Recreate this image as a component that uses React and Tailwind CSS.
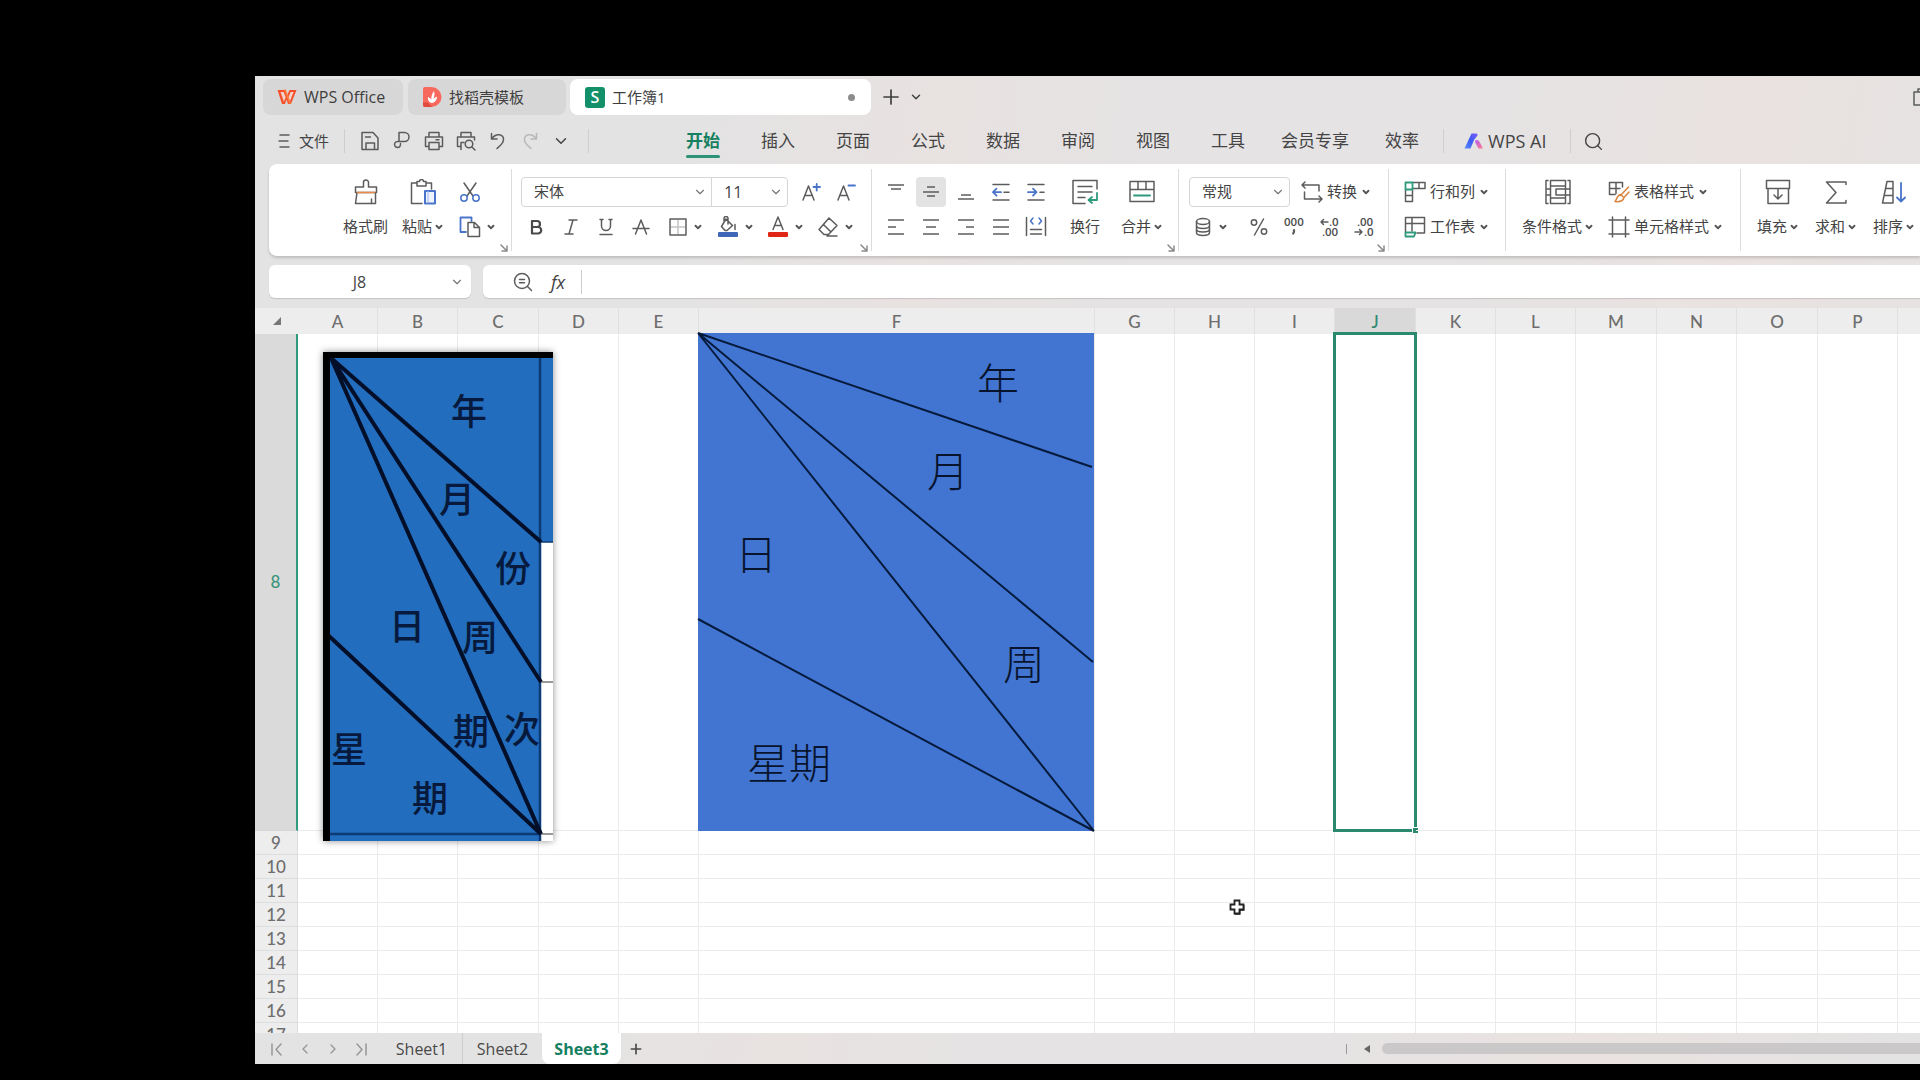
import { ChevronDown, ChevronLeft, ChevronRight, Plus, Search } from "lucide-react";

const MENUS = ["开始", "插入", "页面", "公式", "数据", "审阅", "视图", "工具"];

// The last column runs off the right edge of the window
const COLUMNS = [
  { name: "A", width: 80 },
  { name: "B", width: 80 },
  { name: "C", width: 81 },
  { name: "D", width: 80 },
  { name: "E", width: 80 },
  { name: "F", width: 396 },
  { name: "G", width: 80 },
  { name: "H", width: 80 },
  { name: "I", width: 80 },
  { name: "J", width: 81 },
  { name: "K", width: 80 },
  { name: "L", width: 80 },
  { name: "M", width: 81 },
  { name: "N", width: 80 },
  { name: "O", width: 81 },
  { name: "P", width: 80 },
  { name: "Q", width: 80 },
];

const ROWS = [9, 10, 11, 12, 13, 14, 15, 16, 17];

const GRAY = "#5c5c5c";
const BLUE = "#4a74c9";
const GREEN = "#2f9a7c";

const Svg = ({ w = 20, h = w, children, stroke = GRAY }) => (
  <svg
    width={w}
    height={h}
    viewBox={`0 0 ${w} ${h}`}
    fill="none"
    stroke={stroke}
    strokeWidth="1.5"
    strokeLinecap="round"
    strokeLinejoin="round"
    className="shrink-0"
    aria-hidden="true"
  >
    {children}
  </svg>
);

const Caret = () => <ChevronDown size={10} strokeWidth={4.5} className="shrink-0 text-[#555]" />;

/* ---------- Icons ---------- */

const WpsLogo = () => (
  <Svg w={20} h={16} stroke="none">
    <path d="M0.500 1h8l1.800 5L12.500 1h7L14 15h-3L9.500 10.500 8 15H5z" fill="#f4502c" />
    <path d="M3.500 3h3.200l2 5.500-1.800 4.200z" fill="#f3d2c9" />
    <path d="M13.600 3h3L12.800 12.500l-1.600-4z" fill="#f3d2c9" />
    <path d="M8 1l5 13" stroke="#ff7d42" strokeWidth="1.800" />
  </Svg>
);

const DockerLogo = () => (
  <Svg w={20} h={20} stroke="none">
    <path d="M3 0h6.500a9.500 9.500 0 0 1 0 20H3a2 2 0 0 1-2-2V2a2 2 0 0 1 2-2z" fill="#f7695c" />
    <path d="M1 15.500h5l4 4.500H3a2 2 0 0 1-2-2z" fill="#e2483e" />
    <path d="M10 16c-3-.500-4.500-3-4-6 1.500.500 2.800 1.500 3.300 3C9 9.500 10 6.500 12 4c.800 3 .500 5.500-.500 8 .8-1.200 2-2 3.500-2.200-.300 3.500-2 6-5 6.200z" fill="#fff" />
  </Svg>
);

const AiLogo = () => (
  <Svg w={20} h={16} stroke="none">
    <defs>
      <linearGradient id="ai-a" x1="0" y1="1" x2="1" y2="0">
        <stop offset="0" stopColor="#5b8cff" />
        <stop offset="0.5" stopColor="#3d5af5" />
        <stop offset="1" stopColor="#7f5cf6" />
      </linearGradient>
      <linearGradient id="ai-b" x1="0" y1="0" x2="1" y2="1">
        <stop offset="0" stopColor="#b45cf0" />
        <stop offset="1" stopColor="#ff7f8f" />
      </linearGradient>
    </defs>
    <path d="M7.500 0.500h4.800q1.700 0 1.200 2L10 7 6.500 15.500H0.500z" fill="url(#ai-a)" />
    <path d="M11 7.500q3-1.500 4.500 1.200l3.500 6.800h-4.500L11.500 10z" fill="url(#ai-b)" />
  </Svg>
);

const IconMenu = () => <Svg w={14} h={16}><path d="M3 2h9M2 8h9M3 14h9" /></Svg>;
const IconSave = () => (
  <Svg><path d="M2 1.500h11l5 5.500v11.500H2zM6 18v-6h8.500v6M5.500 6h5" /></Svg>
);
const IconPdf = () => (
  <Svg><path d="M7 10.500V1.500h5.500a4.500 4.500 0 0 1 0 9H5.500a3 3 0 1 0 2.500 4.700c.5-.8.500-1.700.5-2.700" /></Svg>
);
const IconPrint = () => (
  <Svg><path d="M5 6V1.500h10V6M5 15.500H1.500V6h17v9.500H15M5 11.500h10v7H5zM12 8.700h3" /></Svg>
);
const IconPreview = () => (
  <Svg><path d="M5 6V1.500h10V6M18.500 9V6h-17v9.500H5M5 18.500v-7h3" /><circle cx="13" cy="13" r="3.800" /><path d="M16 16l3 3" /></Svg>
);
const IconUndo = () => <Svg><path d="M3.500 2.500v5.500h5.500M4 7.500C8 1.500 16 3 15.500 9c-.3 3.500-3.500 6-6.500 8.500" /></Svg>;
const IconRedo = () => (
  <Svg stroke="#b9b7b7"><path d="M16.500 2.500v5.500H11M16 7.500C12 1.500 4 3 4.500 9c.3 3.500 3.500 6 6.500 8.500" /></Svg>
);

const IconBrush = () => (
  <Svg w={26}>
    <path d="M10.500 8V3.500a2.500 2.500 0 0 1 5 0V8h8v5.500h-21V8zM4 13.500L2.500 24.500H22.500V13.500" />
    <path d="M4.500 13.500h17" stroke="#e8894a" />
    <path d="M18.500 20v4.500" />
  </Svg>
);
const IconPaste = () => (
  <Svg w={28} h={26}>
    <path d="M8 4H2.500v20.500H13M17 4h5.500v6M8 2.500h2.500a2 2 0 0 1 4 0H17V7H8z" />
    <path d="M16 12h10v12.500H16z" stroke={BLUE} fill="#eef3fd" strokeWidth="2" />
    <path d="M19 12v12" stroke="#9db6e8" strokeWidth="1" />
  </Svg>
);
const IconCut = () => (
  <Svg w={22}>
    <path d="M5 2l9 13M17 2L8 15" />
    <circle cx="5" cy="17" r="3.200" stroke={BLUE} />
    <circle cx="17" cy="17" r="3.200" stroke={BLUE} />
  </Svg>
);
const IconCopy = () => (
  <Svg w={22}>
    <path d="M7 16H1.500V1.500h11V5" stroke={BLUE} strokeWidth="1.800" />
    <path d="M9 6.500h6.500L20.500 11.500v9H9zM15 6.500v5h5.500" />
  </Svg>
);
const IconLetter = ({ sign }) => (
  <Svg w={20}>
    <path d="M2 18L7.500 4 13 18M4 13.500h7" />
    <path d={sign === "+" ? "M12.500 5h6.500M15.700 2v6.500" : "M12.500 3.500h6.500"} stroke={BLUE} strokeWidth="1.800" />
  </Svg>
);
const IconBold = () => <Svg w={18}><path d="M5 3h5a3 3 0 0 1 0 6H5zM5 9h6a3.200 3.200 0 0 1 0 6.500H5z" strokeWidth="2.200" stroke="#4a4a4a" /></Svg>;
const IconItalic = () => <Svg w={18}><path d="M7 2h8M3 16h8M11 2L7 16" /></Svg>;
const IconUnderline = () => <Svg w={18}><path d="M4.500 1.500V8a4.500 4.500 0 0 0 9 0V1.500M3 1.500h3M12 1.500h3M3 16.500h12" /></Svg>;
const IconStrike = () => <Svg w={18}><path d="M3.500 16L9 2l5.500 14M1 10.500h16" /></Svg>;
const IconBorder = () => (
  <Svg w={20}><path d="M10 3v14M3 10h14" stroke="#c4c4c4" /><path d="M2 2h16v16H2z" /></Svg>
);
const IconFill = () => (
  <Svg w={22}>
    <path d="M9 3l6.500 6.500-5.500 5H8L4.500 10.500zM7 5V2.500a2 2 0 0 1 4 0V8M18 8.500v5" />
    <rect x="1" y="16" width="20" height="5" rx="1" fill="#3f66b8" stroke="none" />
  </Svg>
);
const IconFontColor = () => (
  <Svg w={22}>
    <path d="M6 13.500L11 1l5 12.500M8 9.500h6" />
    <rect x="1" y="16" width="20" height="5" rx="1" fill="#e02617" stroke="none" />
  </Svg>
);
const IconEraser = () => (
  <Svg w={22}><path d="M12 2l8 7.500-8.500 9H7l-5-5zM6.500 8.500l7.500 7.500M10 20h10" /></Svg>
);

// Horizontal rules that make up the alignment buttons: [x1, x2, y]
const Rules = ({ lines }) => (
  <Svg w={20}>
    {lines.map(([a, b, y], i) => (
      <path key={i} d={`M${a} ${y}H${b}`} strokeLinecap="butt" strokeWidth="1.600" />
    ))}
  </Svg>
);
const IconOutdent = () => (
  <Svg w={20}><path d="M2 2.500h16M2 18h16M13 10.200h5" /><path d="M10 10.200H2M5.500 6.700L2 10.200l3.500 3.500" stroke={BLUE} strokeWidth="1.800" /></Svg>
);
const IconIndent = () => (
  <Svg w={20}><path d="M2 2.500h16M2 18h16M14 10.200h4" /><path d="M2 10.200h8M7 6.700l3.500 3.500L7 13.700" stroke={BLUE} strokeWidth="1.800" /></Svg>
);
const IconDistribute = () => (
  <Svg w={22}>
    <path d="M1.500 1.500v18M20.500 1.500v18M5.500 13.500h11M5.500 18h11" />
    <path d="M8 2L5.500 5 8 8M14 2l2.500 3L14 8" stroke={BLUE} />
  </Svg>
);
const IconWrap = () => (
  <Svg w={28}>
    <path d="M14 25.500H2V2.500h24V11M7 8.500h14M7 14h14M7 19.500h7" />
    <path d="M26 15v7h-8M21 19l-3.500 3 3.500 3" stroke={GREEN} strokeWidth="1.800" />
  </Svg>
);
const IconMerge = () => (
  <Svg w={28}>
    <path d="M2 3.500h24v20H2zM2 11.500h24M10 3.500v8M18 3.500v8" />
    <path d="M6 17.500h16" stroke={GREEN} strokeWidth="1.800" />
  </Svg>
);
const IconConvert = () => (
  <Svg w={22}><path d="M4 1L1 4l3 3M1 4h17v6M3.500 11v7h17M18 15l3 3-3 3" /></Svg>
);
const IconMoney = () => (
  <Svg w={20}>
    <ellipse cx="10" cy="4.500" rx="6.500" ry="3" />
    <path d="M3.500 4.500v11c0 4 13 4 13 0v-11M3.500 8.500c0 4 13 4 13 0M3.500 12c0 4 13 4 13 0" />
  </Svg>
);
const IconPercent = () => (
  <Svg w={20}><circle cx="5" cy="5.500" r="2.700" /><circle cx="15" cy="14.500" r="2.700" /><path d="M14.500 2l-9 16" /></Svg>
);
const DigitText = ({ x, y, children }) => (
  <text x={x} y={y} fill="#4d4d4d" stroke="none" fontSize="10" fontWeight="600" fontFamily="Inter, sans-serif">
    {children}
  </text>
);
const IconThousands = () => (
  <Svg w={20}><DigitText x={0} y={8.500}>000</DigitText><path d="M10 13v2l-.8 1.500" strokeWidth="2.200" /></Svg>
);
const IconMoreDecimals = () => (
  <Svg w={20}><path d="M9 5H2M4.500 2.500L2 5l2.500 2.500" /><DigitText x={10} y={8.500}>.0</DigitText><DigitText x={3} y={18.500}>.00</DigitText></Svg>
);
const IconLessDecimals = () => (
  <Svg w={20}><DigitText x={3} y={8.500}>.00</DigitText><path d="M1 15h7M5.500 12.500L8 15l-2.500 2.500" /><DigitText x={10} y={18.500}>.0</DigitText></Svg>
);
const IconRowsCols = () => (
  <Svg w={22}>
    <path d="M9 1.500h12v6H9M15 1.500v6M1.500 9v11.500h7V9M1.500 14.500h7" />
    <path d="M1.500 1.500h7v7h-7z" stroke={GREEN} strokeWidth="1.800" />
  </Svg>
);
const IconSheet = () => (
  <Svg w={22}>
    <path d="M1.500 16V1.500h19V17H13M1.500 7.500h19M8 1.500V15" />
    <path d="M1.500 16.500h10l-1.500 4H1.500z" stroke={GREEN} strokeWidth="1.800" />
  </Svg>
);
const IconConditional = () => (
  <Svg w={28}>
    <path d="M4 2.500H2v23h2M24 2.500h2v23h-2M6.500 2.500h15V8h-15zM6.500 20h15v5.500h-15zM6.500 8v12M21.500 8v3H12v6h9.500v3M21.500 11v6M2 11h4.500M2 17h4.500M21.500 11H26M21.500 17H26" />
  </Svg>
);
const IconTableStyle = () => (
  <Svg w={22}>
    <path d="M7 13.500H1.500v-12h13V6M1.500 7.500H12M8 1.500v11" />
    <path d="M20.500 6l-8 8.500M21 11l-5.500 6M12.500 13.500l3.500 3c-1 4-5 4.500-9 4 2-1.500 1.500-6 5.500-7z" stroke="#d9843f" />
  </Svg>
);
const IconCellStyle = () => (
  <Svg w={22}><path d="M4.500 1v20M17.500 1v20M1 4h20M1 18h20" /></Svg>
);
const IconFillDown = () => (
  <Svg w={26}><path d="M1.500 1.500h23v8h-23zM3 9.500v15h20.500v-15M13 9.500v10M9 16l4 4 4-4" /></Svg>
);
const IconSum = () => (
  <Svg w={24}><path d="M22 4.500V2H2.500L12 12.500 2.500 23H22v-2.500" /></Svg>
);
const IconSort = () => (
  <Svg w={26}>
    <path d="M1.500 24L6 2.500h6V24zM4.500 9.500H12M3 16.500h9" />
    <path d="M20 4v18M16 18.500l4 4 4-4" stroke={BLUE} strokeWidth="1.800" />
  </Svg>
);

/* ---------- Ribbon pieces ---------- */

const ToolButton = ({ label, children, active = false, caret = false, narrow = false }) => (
  <button
    aria-label={label}
    className={`flex h-[30px] items-center justify-center rounded ${active ? "bg-[#e3e3e3]" : ""} ${
      caret ? "w-[39px] gap-[5px]" : narrow ? "w-6" : "w-[30px]"
    }`}
  >
    {children}
    {caret && <Caret />}
  </button>
);

const BigButton = ({ label, icon, caret = false }) => (
  <button className="flex flex-col items-start">
    <span className="flex h-[35px] items-center justify-center self-center">{icon}</span>
    <span className="flex h-[35px] items-center gap-[2px]">
      {label}
      {caret && <Caret />}
    </span>
  </button>
);

const WideButton = ({ label, icon }) => (
  <button className="flex h-[35px] items-center gap-1">
    {icon}
    {label}
    <Caret />
  </button>
);

const Row = ({ className, children }) => <div className={`flex h-[35px] items-center ${className}`}>{children}</div>;

const Group = ({ className, launcher, children }) => (
  <div className={`relative flex shrink-0 items-start pt-[10px] ${className}`}>
    {children}
    {launcher && (
      <button aria-label="更多设置" className="absolute right-1 bottom-1">
        <Svg w={8} stroke="#8a8a8a"><path d="M1 1l5 5M7 2v5H2" /></Svg>
      </button>
    )}
    <span className="absolute top-[5px] right-0 bottom-[5px] w-px bg-[#dcdcdc]" />
  </div>
);

const Ribbon = () => (
  <div className="ml-[14px] flex h-[92px] shrink-0 overflow-hidden rounded-l-lg bg-white text-[15px] whitespace-nowrap text-[#444] shadow-[0_2px_3px_rgba(0,0,0,0.16)]">
    <Group className="w-[243px] gap-[14px] pl-[74px]" launcher>
      <BigButton label="格式刷" icon={<IconBrush />} />
      <BigButton label="粘贴" icon={<IconPaste />} caret />
      <div>
        <Row><ToolButton label="剪切" narrow><IconCut /></ToolButton></Row>
        <Row><ToolButton label="复制" caret><IconCopy /></ToolButton></Row>
      </div>
    </Group>

    <Group className="w-[360px] pl-[9px]" launcher>
      <div>
        <Row className="gap-[5px]">
          <div className="mr-[3px] flex h-[30px] w-[267px] rounded border border-[#d6d6d6]">
            <div className="relative w-[190px] border-r border-[#d6d6d6]">
              <select aria-label="字体" className="h-full w-full appearance-none bg-transparent pl-3 outline-none">
                <option>宋体</option>
              </select>
              <ChevronDown size={14} className="pointer-events-none absolute top-[7px] right-1 text-[#777]" />
            </div>
            <div className="relative flex-1">
              <select aria-label="字号" className="h-full w-full appearance-none bg-transparent pl-3 text-base outline-none">
                <option>11</option>
              </select>
              <ChevronDown size={14} className="pointer-events-none absolute top-[7px] right-1 text-[#777]" />
            </div>
          </div>
          <ToolButton label="增大字号"><IconLetter sign="+" /></ToolButton>
          <ToolButton label="减小字号"><IconLetter sign="-" /></ToolButton>
        </Row>
        <Row className="gap-[11px] pl-[3px]">
          <ToolButton label="加粗" narrow><IconBold /></ToolButton>
          <ToolButton label="倾斜" narrow><IconItalic /></ToolButton>
          <ToolButton label="下划线" narrow><IconUnderline /></ToolButton>
          <ToolButton label="删除线" narrow><IconStrike /></ToolButton>
          <div className="ml-[2px] flex gap-[11px]">
            <ToolButton label="边框" caret><IconBorder /></ToolButton>
            <ToolButton label="填充颜色" caret><IconFill /></ToolButton>
            <ToolButton label="字体颜色" caret><IconFontColor /></ToolButton>
            <ToolButton label="清除" caret><IconEraser /></ToolButton>
          </div>
        </Row>
      </div>
    </Group>

    <Group className="w-[307px] pl-[9px]" launcher>
      <div>
        <Row className="gap-[5px]">
          <ToolButton label="顶端对齐"><Rules lines={[[2, 18, 3], [5, 15, 7]]} /></ToolButton>
          <ToolButton label="垂直居中" active><Rules lines={[[6, 14, 5], [2, 18, 10], [6, 14, 14]]} /></ToolButton>
          <ToolButton label="底端对齐"><Rules lines={[[5, 15, 13], [2, 18, 17]]} /></ToolButton>
          <ToolButton label="减少缩进"><IconOutdent /></ToolButton>
          <ToolButton label="增加缩进"><IconIndent /></ToolButton>
        </Row>
        <Row className="gap-[5px]">
          <ToolButton label="左对齐"><Rules lines={[[2, 18, 3], [2, 10, 10], [2, 18, 17]]} /></ToolButton>
          <ToolButton label="水平居中"><Rules lines={[[2, 18, 3], [5, 15, 10], [2, 18, 17]]} /></ToolButton>
          <ToolButton label="右对齐"><Rules lines={[[2, 18, 3], [10, 18, 10], [2, 18, 17]]} /></ToolButton>
          <ToolButton label="两端对齐"><Rules lines={[[2, 18, 3], [2, 18, 10], [2, 18, 17]]} /></ToolButton>
          <ToolButton label="分散对齐"><IconDistribute /></ToolButton>
        </Row>
      </div>
      <div className="ml-[19px] flex gap-[21px]">
        <BigButton label="换行" icon={<IconWrap />} />
        <BigButton label="合并" icon={<IconMerge />} caret />
      </div>
    </Group>

    <Group className="w-[210px] pl-[10px]" launcher>
      <div>
        <Row className="gap-[11px]">
          <div className="relative h-[30px] w-[101px] rounded border border-[#d6d6d6]">
            <select aria-label="数字格式" className="h-full w-full appearance-none bg-transparent pl-3 outline-none">
              <option>常规</option>
            </select>
            <ChevronDown size={14} className="pointer-events-none absolute top-[7px] right-1 text-[#777]" />
          </div>
          <WideButton label="转换" icon={<IconConvert />} />
        </Row>
        <Row className="gap-[5px] pl-[2px]">
          <ToolButton label="货币" caret><IconMoney /></ToolButton>
          <span className="w-1" />
          <ToolButton label="百分比"><IconPercent /></ToolButton>
          <ToolButton label="千位分隔"><IconThousands /></ToolButton>
          <ToolButton label="增加小数位数"><IconMoreDecimals /></ToolButton>
          <ToolButton label="减少小数位数"><IconLessDecimals /></ToolButton>
        </Row>
      </div>
    </Group>

    <Group className="w-[117px] pl-[15px]">
      <div>
        <WideButton label="行和列" icon={<IconRowsCols />} />
        <WideButton label="工作表" icon={<IconSheet />} />
      </div>
    </Group>

    <Group className="w-[235px] gap-[14px] pl-4">
      <BigButton label="条件格式" icon={<IconConditional />} caret />
      <div>
        <WideButton label="表格样式" icon={<IconTableStyle />} />
        <WideButton label="单元格样式" icon={<IconCellStyle />} />
      </div>
    </Group>

    <Group className="gap-4 pr-6 pl-4">
      <BigButton label="填充" icon={<IconFillDown />} caret />
      <BigButton label="求和" icon={<IconSum />} caret />
      <BigButton label="排序" icon={<IconSort />} caret />
    </Group>
  </div>
);

/* ---------- Title and menu bars ---------- */

const TitleBar = () => (
  <div className="flex shrink-0 items-center pt-[3px] pl-2 text-[15px] text-[#3f3f3f]">
    <button className="flex h-9 w-[140px] items-center gap-[7px] rounded-lg bg-[#d8d7d7] pl-[14px] text-base">
      <WpsLogo />
      WPS Office
    </button>
    <button className="ml-[5px] flex h-9 w-[158px] items-center gap-[7px] rounded-lg bg-[#d8d7d7] pl-[14px]">
      <DockerLogo />
      找稻壳模板
    </button>
    <button className="ml-1 flex h-9 w-[301px] items-center gap-[7px] rounded-lg bg-white pr-4 pl-[15px]">
      <span className="flex h-[21px] w-5 items-center justify-center rounded-[3px] bg-[#119069] text-base leading-none font-semibold text-white">
        S
      </span>
      <span className="flex-1 text-left">工作簿1</span>
      <span className="h-[7px] w-[7px] rounded-full bg-[#8c8c8c]" />
    </button>
    <button aria-label="新建" className="ml-2">
      <Plus size={24} strokeWidth={1.7} />
    </button>
    <button aria-label="标签列表" className="ml-[6px]">
      <ChevronDown size={14} strokeWidth={2.5} />
    </button>
    <button aria-label="窗口" className="-mr-3 ml-auto">
      <Svg w={20}><path d="M6 4V2h12v12h-2M2 5h13v13H2z" /></Svg>
    </button>
  </div>
);

const Separator = ({ className }) => <span className={`h-6 w-px shrink-0 bg-[#cfcdcd] ${className}`} />;

const MenuBar = () => (
  <div className="flex h-[49px] shrink-0 items-center pt-[3px] pl-[22px] whitespace-nowrap text-[#444]">
    <button className="flex items-center gap-2 text-[15px]">
      <IconMenu />
      文件
    </button>
    <Separator className="ml-[15px]" />
    <div className="ml-[15px] flex items-center gap-3">
      <button aria-label="保存"><IconSave /></button>
      <button aria-label="输出为PDF"><IconPdf /></button>
      <button aria-label="打印"><IconPrint /></button>
      <button aria-label="打印预览"><IconPreview /></button>
      <button aria-label="撤销"><IconUndo /></button>
      <button aria-label="恢复"><IconRedo /></button>
      <button aria-label="更多"><ChevronDown size={18} strokeWidth={2} /></button>
    </div>
    <Separator className="ml-[18px]" />
    <nav className="ml-[97px] flex items-center gap-[41px] text-[17px]">
      {MENUS.map((item, i) =>
        i === 0 ? (
          <button key={item} className="relative font-bold text-[#14805f]">
            {item}
            <span className="absolute -bottom-1 left-0 h-[3px] w-full rounded bg-[#2c9474]" />
          </button>
        ) : (
          <button key={item}>{item}</button>
        )
      )}
    </nav>
    <div className="ml-9 flex items-center gap-9 text-[17px]">
      <button>会员专享</button>
      <button>效率</button>
    </div>
    <Separator className="ml-6" />
    <button className="ml-5 flex items-center gap-1 text-lg">
      <AiLogo />
      WPS AI
    </button>
    <Separator className="ml-6" />
    <button aria-label="搜索" className="ml-3">
      <Search size={21} strokeWidth={1.6} />
    </button>
  </div>
);

const FormulaBar = () => (
  <div className="mt-[9px] flex h-[33px] shrink-0 gap-3 pl-[14px] text-base text-[#444]">
    <div className="flex w-[202px] items-center rounded-md bg-white pr-[7px] shadow-[0_1px_1px_rgba(0,0,0,0.14)]">
      <input aria-label="名称框" defaultValue="J8" className="w-full min-w-0 bg-transparent pr-0 text-center outline-none" />
      <ChevronDown size={14} className="shrink-0 text-[#777]" />
    </div>
    <div className="flex flex-1 items-center rounded-l-md bg-white pl-[30px] shadow-[0_1px_1px_rgba(0,0,0,0.14)]">
      <button aria-label="查找">
        <Svg w={20}><circle cx="9" cy="9" r="7.500" /><path d="M14.500 14.500l4 4M6.500 7.500h5M6.500 10.800h5" /></Svg>
      </button>
      <button aria-label="插入函数" className="ml-[18px] font-['Open_Sans',sans-serif] text-lg font-medium italic">
        fx
      </button>
      <Separator className="mx-4" />
      <input aria-label="编辑栏" className="h-full flex-1 bg-transparent outline-none" />
    </div>
  </div>
);

/* ---------- Sheet ---------- */

// Cell with the finished multi-way slanted header
const SlantedHeader = () => (
  <svg
    viewBox="0 0 396 498"
    className="relative block h-[498px] w-[396px] overflow-visible bg-[#4175d1]"
    fill="#08142e"
    fontSize="42"
    fontWeight="300"
    textAnchor="middle"
  >
    <path
      d="M0 0L394 134M0 0L395 329M0 0L396 498M0 286L396 498"
      stroke="#061a3c"
      strokeWidth="2"
      fill="none"
    />
    <text x="300" y="66">年</text>
    <text x="250" y="154">月</text>
    <text x="58" y="237">日</text>
    <text x="326" y="347">周</text>
    <text x="91" y="446">星期</text>
  </svg>
);

// Floating picture pasted over columns A to C
const SamplePicture = () => (
  <svg
    viewBox="0 0 230 489"
    className="absolute top-[44px] left-[68px] h-[489px] w-[230px] bg-white shadow-[0_0_7px_rgba(0,0,0,0.45)]"
    fill="#071a3e"
    fontSize="36"
    fontWeight="500"
    textAnchor="middle"
  >
    <path d="M0 0H230V190H218V489H0z" fill="#226dbd" />
    <path d="M217 4V489M6 482H218" stroke="#0b3a74" strokeWidth="2.500" />
    <path d="M217 190H230" stroke="#0b3a74" strokeWidth="1.500" />
    <path d="M218 330H230M218 482H230" stroke="#777" strokeWidth="1.500" />
    <path d="M8 6L218 190M8 6L218 330M8 6L218 482M6 284L218 482" stroke="#030e28" strokeWidth="4" fill="none" />
    <path d="M0 0H230V6H7V489H0z" fill="#000" />
    <text x="146" y="73">年</text>
    <text x="134" y="161">月</text>
    <text x="190" y="230">份</text>
    <text x="84" y="288">日</text>
    <text x="157" y="299">周</text>
    <text x="148" y="393">期</text>
    <text x="199" y="391">次</text>
    <text x="26" y="411">星</text>
    <text x="107" y="460">期</text>
  </svg>
);

const Selection = () => (
  <span className="absolute -top-[2px] -right-[2px] -bottom-[2px] -left-[2px] border-[3px] border-[#2b8a6e]">
    <span className="absolute -right-1 -bottom-1 h-[5px] w-[5px] bg-[#2b8a6e] outline outline-white" />
  </span>
);

const Sheet = () => (
  <main className="relative mt-[10px] min-h-0 flex-1 overflow-hidden bg-white">
    <table className="w-max table-fixed border-separate border-spacing-0 font-['Lato',sans-serif] text-[17px] text-[#6e6e6e]">
      <colgroup>
        <col style={{ width: 43 }} />
        {COLUMNS.map((col) => (
          <col key={col.name} style={{ width: col.width }} />
        ))}
      </colgroup>
      <thead>
        <tr className="h-[26px] bg-[#ededed]">
          <th scope="col" className="p-0">
            <div className="flex w-[43px] justify-center">
              <Svg w={8} stroke="none"><path d="M8 0v8H0z" fill="#777" /></Svg>
            </div>
          </th>
          {COLUMNS.map((col) => (
            <th
              key={col.name}
              scope="col"
              className={`border-r border-[#e0e0e0] p-0 leading-none font-medium ${
                col.name === "J" ? "bg-[#d9d9d9] text-[#2f8a70]" : ""
              }`}
            >
              <div style={{ width: col.width - 1 }}>{col.name}</div>
            </th>
          ))}
        </tr>
      </thead>
      <tbody>
        <tr className="h-[497px]">
          <th
            scope="row"
            className="border-r-2 border-b border-r-[#2f9a7c] border-b-[#d4d4d4] bg-[#dadada] p-0 font-medium text-[#3c9479]"
          >
            8
          </th>
          {COLUMNS.map((col) => (
            <td key={col.name} className="relative border-r border-b border-[#ebebeb] p-0">
              {col.name === "F" && (
                <div className="absolute -top-px -left-px font-['Noto_Sans_CJK_SC',sans-serif]">
                  <SlantedHeader />
                </div>
              )}
              {col.name === "J" && <Selection />}
            </td>
          ))}
        </tr>
        {ROWS.map((row) => (
          <tr key={row} className="h-6">
            <th
              scope="row"
              className="border-r border-b border-[#dedede] bg-[#ededed] p-0 leading-none font-medium"
            >
              {row}
            </th>
            {COLUMNS.map((col) => (
              <td key={col.name} className="border-r border-b border-[#ebebeb] p-0" />
            ))}
          </tr>
        ))}
      </tbody>
    </table>
    <SamplePicture />
    <svg viewBox="0 0 16 16" className="absolute top-[591px] left-[974px] h-4 w-4" aria-hidden="true">
      <path d="M5.500 1.500h5v4h4v5h-4v4h-5v-4h-4v-5h4z" fill="#fff" stroke="#222" strokeWidth="1.800" />
      <path d="M14.700 6v5h-4v4h-5" fill="none" stroke="#222" strokeWidth="1.500" />
    </svg>
  </main>
);

const SheetBar = () => (
  <div className="flex h-[31px] shrink-0 items-center text-base text-[#4a4a4a]">
    <div className="flex items-center gap-3 pl-[14px] text-[#979797]">
      <button aria-label="第一个工作表"><Svg w={16} stroke="#979797"><path d="M3 3v11M12 3L7 8.500l5 5.500" /></Svg></button>
      <button aria-label="上一个工作表"><ChevronLeft size={16} /></button>
      <button aria-label="下一个工作表"><ChevronRight size={16} /></button>
      <button aria-label="最后一个工作表"><Svg w={16} stroke="#979797"><path d="M13 3v11M4 3l5 5.500L4 14" /></Svg></button>
    </div>
    <button className="ml-[13px] h-full w-20 border-r border-transparent">Sheet1</button>
    <button className="h-full w-20 border-l border-[#cfcdcd]">Sheet2</button>
    <button className="h-full w-[79px] rounded-b-lg bg-white font-bold text-[#14805f]">Sheet3</button>
    <button aria-label="新建工作表" className="ml-[7px]">
      <Plus size={16} strokeWidth={2.5} />
    </button>
    <div className="ml-auto flex w-[574px] items-center">
      <span className="h-[10px] w-px bg-[#999]" />
      <button aria-label="向左滚动" className="ml-[17px]">
        <Svg w={6} h={8} stroke="none"><path d="M6 0v8L0 4z" fill="#666" /></Svg>
      </button>
      <div className="ml-3 h-[11px] flex-1 rounded-l-full bg-[#cac8c8]" />
    </div>
  </div>
);

const App = () => (
  <div className="flex h-screen flex-col overflow-hidden bg-black pt-[76px] pb-4 pl-[255px]">
    <div className="flex min-h-0 flex-1 flex-col overflow-hidden bg-[linear-gradient(100deg,#e3e3e3_0%,#e4e3e3_25%,#e8e2e1_38%,#e5e3e4_50%,#e5e3e4_66%,#e9e2e0_82%,#e3e3e3_100%)] font-['Open_Sans','Noto_Sans_CJK_SC',sans-serif]">
      <TitleBar />
      <MenuBar />
      <Ribbon />
      <FormulaBar />
      <Sheet />
      <SheetBar />
    </div>
  </div>
);

export default App;
